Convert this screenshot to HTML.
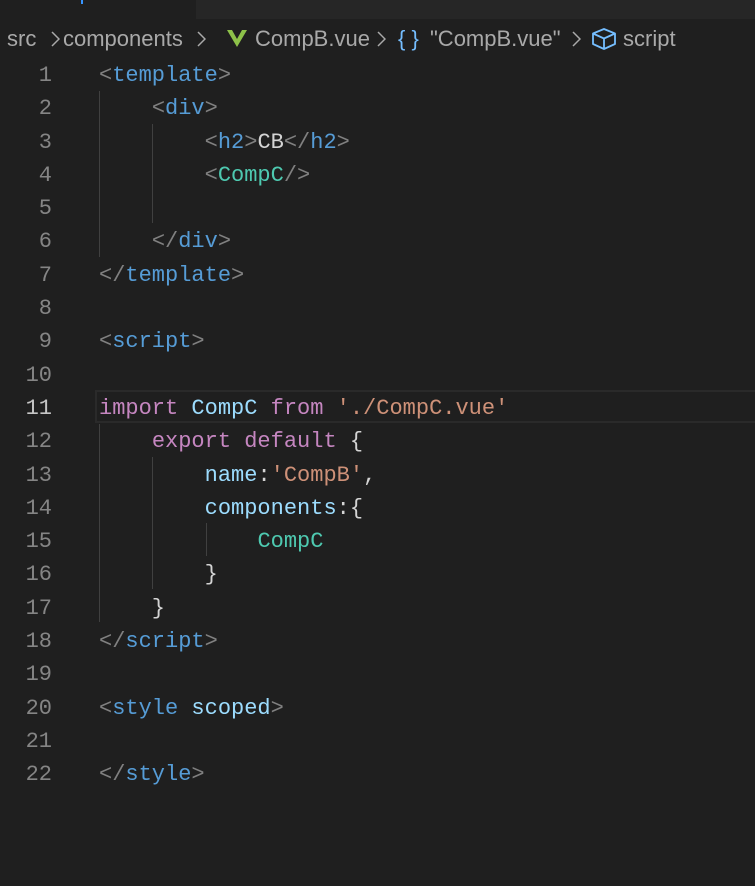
<!DOCTYPE html>
<html><head><meta charset="utf-8"><style>
html,body{margin:0;padding:0;background:#1f1f1f;width:755px;height:886px;overflow:hidden;position:relative}
.top{position:absolute;left:0;top:0;width:755px;height:19px;background:#1f1f1f}
.top .r{position:absolute;left:196px;top:0;right:0;height:19px;background:#262626}
.cur{position:absolute;left:81px;top:0;width:2px;height:4px;background:#3794ff}
.b{position:absolute;top:25px;height:28px;font:22px "Liberation Sans",sans-serif;color:#a9a9a9;white-space:nowrap;line-height:28px}
.ch{position:absolute;top:31px}
.hl{position:absolute;left:95px;top:390px;right:0;height:29px;border:2px solid #2a2a2a;border-right:none}
.code{position:absolute;left:0;top:59px;font:22px "Liberation Mono",monospace;line-height:33.3px;white-space:pre}
.ln{position:absolute;left:0;top:0;width:52px;text-align:right;color:#858585}
.tx{position:absolute;left:99px;top:0;color:#d4d4d4}
.g{position:absolute;width:1px;background:#404040}
.p{color:#808080}.t{color:#569cd6}.c{color:#4ec9b0}.k{color:#c586c0}.v{color:#9cdcfe}.s{color:#ce9178}.w{color:#d4d4d4}
</style></head><body>
<div class="top"><div class="r"></div><div class="cur"></div></div>
<div class="b" style="left:7px">src</div>
<svg class="ch" style="left:50px" width="10" height="16" viewBox="0 0 10 16"><path d="M2 1l7 7-7 7" fill="none" stroke="#a9a9a9" stroke-width="1.5"/></svg>
<div class="b" style="left:63px">components</div>
<svg class="ch" style="left:196px" width="10" height="16" viewBox="0 0 10 16"><path d="M2 1l7 7-7 7" fill="none" stroke="#a9a9a9" stroke-width="1.5"/></svg>
<svg style="position:absolute;left:226px;top:29px" width="22" height="20" viewBox="0 0 22 20"><path d="M1 1h5l5 9 5-9h5l-10 17z" fill="#8dc149"/><path d="M6.5 1h2.5l2 3.5 2-3.5h2.5l-4.5 8z" fill="#1f1f1f"/></svg>
<div class="b" style="left:255px">CompB.vue</div>
<svg class="ch" style="left:376px" width="10" height="16" viewBox="0 0 10 16"><path d="M2 1l7 7-7 7" fill="none" stroke="#a9a9a9" stroke-width="1.5"/></svg>
<div class="b" style="left:398px;color:#75beff">{ }</div>
<div class="b" style="left:430px">"CompB.vue"</div>
<svg class="ch" style="left:571px" width="10" height="16" viewBox="0 0 10 16"><path d="M2 1l7 7-7 7" fill="none" stroke="#a9a9a9" stroke-width="1.5"/></svg>
<svg style="position:absolute;left:591px;top:27px" width="26" height="24" viewBox="0 0 26 24"><path d="M13 2l11 4.5v10.5l-11 5-11-5V6.5z M2 6.5l11 5 11-5 M13 11.5v10.5" fill="none" stroke="#75beff" stroke-width="1.8" stroke-linejoin="round"/></svg>
<div class="b" style="left:623px">script</div>
<div class="hl"></div>
<div class="g" style="left:99px;top:91px;height:166px"></div>
<div class="g" style="left:152px;top:124px;height:99px"></div>
<div class="g" style="left:99px;top:424px;height:198px"></div>
<div class="g" style="left:152px;top:457px;height:132px"></div>
<div class="g" style="left:206px;top:523px;height:33px"></div>
<div class="code"><div class="ln">1
2
3
4
5
6
7
8
9
10
<span style="color:#c6c6c6">11</span>
12
13
14
15
16
17
18
19
20
21
22</div><div class="tx"><span class="p">&lt;</span><span class="t">template</span><span class="p">&gt;</span>
    <span class="p">&lt;</span><span class="t">div</span><span class="p">&gt;</span>
        <span class="p">&lt;</span><span class="t">h2</span><span class="p">&gt;</span>CB<span class="p">&lt;/</span><span class="t">h2</span><span class="p">&gt;</span>
        <span class="p">&lt;</span><span class="c">CompC</span><span class="p">/&gt;</span>

    <span class="p">&lt;/</span><span class="t">div</span><span class="p">&gt;</span>
<span class="p">&lt;/</span><span class="t">template</span><span class="p">&gt;</span>

<span class="p">&lt;</span><span class="t">script</span><span class="p">&gt;</span>

<span class="k">import</span> <span class="v">CompC</span> <span class="k">from</span> <span class="s">'./CompC.vue'</span>
    <span class="k">export</span> <span class="k">default</span> {
        <span class="v">name</span>:<span class="s">'CompB'</span>,
        <span class="v">components</span>:{
            <span class="c">CompC</span>
        }
    }
<span class="p">&lt;/</span><span class="t">script</span><span class="p">&gt;</span>

<span class="p">&lt;</span><span class="t">style</span> <span class="v">scoped</span><span class="p">&gt;</span>

<span class="p">&lt;/</span><span class="t">style</span><span class="p">&gt;</span></div></div>
</body></html>
